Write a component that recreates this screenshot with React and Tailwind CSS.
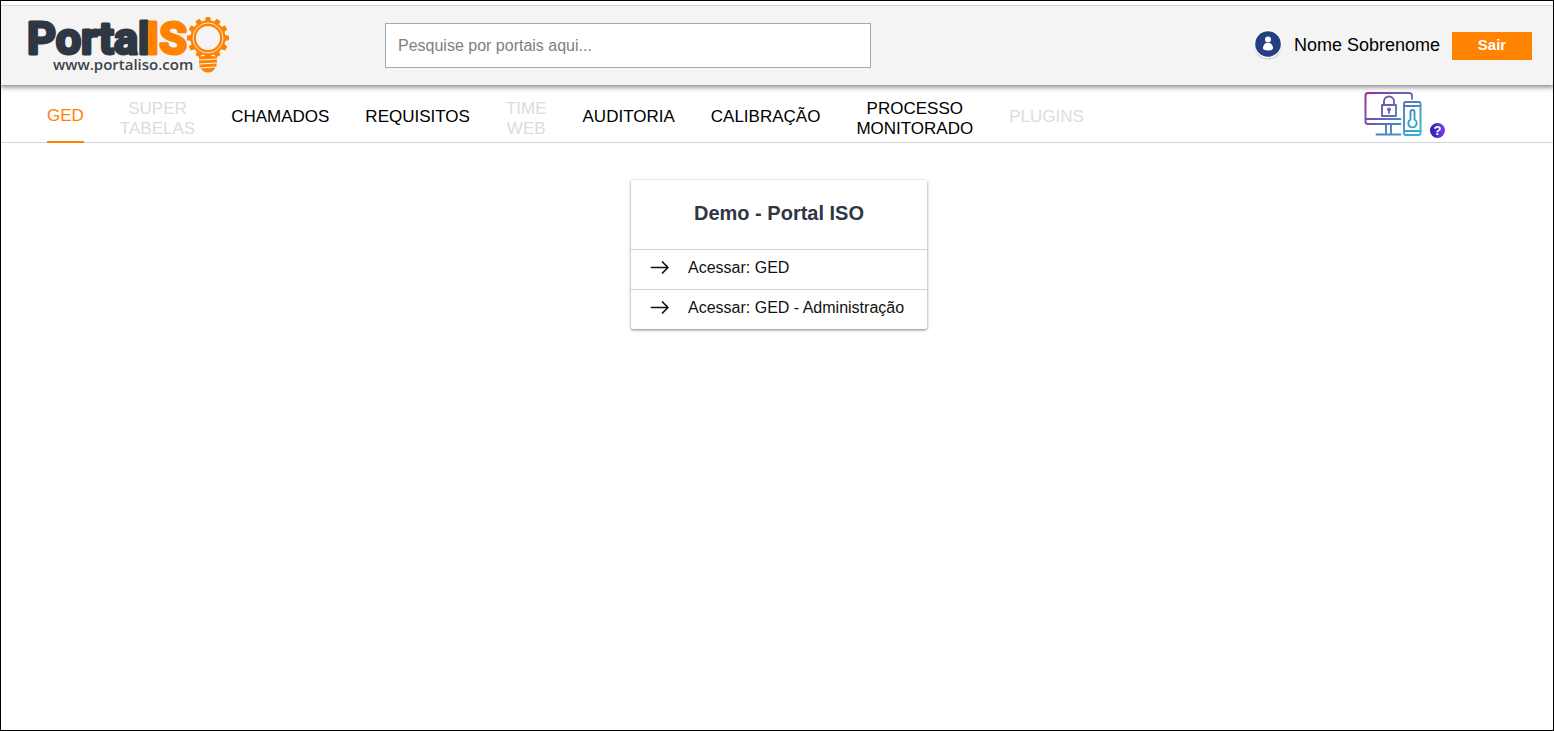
import React from "react";

const tabs = [
  { lines: ["GED"], state: "active" },
  { lines: ["SUPER", "TABELAS"], state: "disabled" },
  { lines: ["CHAMADOS"] },
  { lines: ["REQUISITOS"] },
  { lines: ["TIME", "WEB"], state: "disabled" },
  { lines: ["AUDITORIA"] },
  { lines: ["CALIBRAÇÃO"] },
  { lines: ["PROCESSO", "MONITORADO"] },
  { lines: ["PLUGINS"], state: "disabled" },
];

const links = ["Acessar: GED", "Acessar: GED - Administração"];

const teeth = [0, 30, 60, 90, 120, 150, 180, 210, 240, 270, 300, 330];

function Logo() {
  return (
    <svg width="204" height="62" viewBox="0 0 204 62" className="overflow-visible" role="img" aria-label="Portal ISO">
      <g fontFamily="Roboto, sans-serif" fontWeight="700" fontSize="45" strokeWidth="3" strokeLinejoin="round">
        <text x="0" y="39" fill="#2f3742" stroke="#2f3742">Portal</text>
        <text x="119" y="39" fill="#ff8200" stroke="#ff8200">IS</text>
      </g>
      <text x="26" y="55" fontSize="15" fontWeight="600" fontFamily="'Open Sans', 'Noto Sans', sans-serif" fill="#3b434d">
        www.portaliso.com
      </text>
      <g fill="#ff8200">
        {teeth.map((a) => (
          <path key={a} d="M-3.200 -16 L-2.200 -21 H2.200 L3.200 -16 Z" transform={`translate(181 23) rotate(${a})`} />
        ))}
        <path d="M172 41.500 q9 -1.500 18 0 v2 l-18 1 z" />
        <path d="M172 45.500 l18 -1 v3 l-18 1 z" />
        <path d="M172.500 49.500 l17 -1 v3 l-17 1 z" />
        <path d="M173.500 53.500 l15 -1 l-2.500 3.500 q-5 3 -10 0 z" />
      </g>
      <circle cx="181" cy="23" r="14.800" fill="#f4f4f4" stroke="#ff8200" strokeWidth="5.500" />
      <circle cx="181" cy="23" r="15" fill="none" stroke="#f4f4f4" strokeWidth="0.900" />
    </svg>
  );
}

function UserIcon() {
  return (
    <svg width="30" height="32" viewBox="0 0 30 32" aria-hidden="true">
      <circle cx="15" cy="15.500" r="14" fill="#d4d4d4" />
      <circle cx="15" cy="14" r="14" fill="#fff" />
      <circle cx="15" cy="14" r="12.800" fill="#234080" />
      <circle cx="15" cy="9.500" r="3" fill="#fff" />
      <path d="M15 12.800c2.400 0 3.800 1.200 4.500 3 .5 1.300.7 2.200.4 3-.4 1.200-2 1.700-4.900 1.700s-4.500-.5-4.900-1.700c-.3-.8-.1-1.700.4-3 .7-1.800 2.100-3 4.500-3z" fill="#fff" />
    </svg>
  );
}

function DevicesIcon() {
  return (
    <svg width="58" height="46" viewBox="0 0 58 46" fill="none" stroke="url(#devices)" strokeWidth="1.900" strokeLinecap="round" strokeLinejoin="round" aria-hidden="true">
      <defs>
        <linearGradient id="devices" gradientUnits="userSpaceOnUse" x1="4" y1="2" x2="54" y2="44">
          <stop offset="0" stopColor="#922f9e" />
          <stop offset="0.500" stopColor="#5a72b8" />
          <stop offset="1" stopColor="#2cb9cf" />
        </linearGradient>
      </defs>
      <path d="M48 7V3.500Q48 1 45.500 1H4Q1.500 1 1.500 3.500V30Q1.500 32 4 32H36.500M1.500 27H36.500" />
      <path d="M22 32V42M27 32V42M12.500 42.500H36.500" />
      <rect x="18" y="13" width="14" height="11" />
      <path d="M20 13V9.500a5 5 0 0 1 10 0V13M25 18V21" />
      <circle cx="25" cy="17.500" r="1" />
      <rect x="40" y="10" width="16.500" height="33" rx="1.500" />
      <path d="M40 14H56.500M40 39H56.500" />
      <path d="M46.500 27.500V20a2 2 0 0 1 4 0V27.500a4.200 4.200 0 1 1 -4 0z" />
    </svg>
  );
}

function ArrowIcon() {
  return (
    <svg width="20" height="14" viewBox="0 0 20 14" fill="none" stroke="#111" strokeWidth="1.700" strokeLinecap="round" strokeLinejoin="round" aria-hidden="true">
      <path d="M1.500 6.500H18M12.500 1L18 6.500l-5.500 5.500" />
    </svg>
  );
}

function Tab({ lines, state }) {
  const text = lines.map((line) => (
    <span key={line} className="block">{line}</span>
  ));
  const offset = lines.length > 1 ? "pt-2.5" : "pt-1.5";
  if (state === "disabled") {
    return (
      <button type="button" disabled className={`flex flex-col items-center justify-center text-[#dcdcdc] ${offset}`}>{text}</button>
    );
  }
  if (state === "active") {
    return (
      <a href="#ged" aria-current="page" className={`-mb-px flex items-center border-b-2 border-[#ff8200] text-[#ff8200] ${offset}`}>{text}</a>
    );
  }
  return (
    <a href="#modulo" className={`flex flex-col items-center justify-center text-black ${offset}`}>{text}</a>
  );
}

export default function App() {
  return (
    <div className="min-h-screen border border-black bg-white pt-1 font-['Liberation_Sans',Arial,sans-serif]">
      <header className="flex h-20 items-center border-t border-[#d4d4d4] bg-[#f4f4f4] pr-[21px] pl-[26px] shadow-[0_1px_5px_1px_rgba(0,0,0,0.5)] [clip-path:inset(0_0_-10px_0)]">
        <div className="w-[358px] shrink-0">
          <a href="#inicio" className="inline-block align-middle"><Logo /></a>
        </div>
        <input
          type="search"
          aria-label="Pesquise por portais aqui"
          placeholder="Pesquise por portais aqui..."
          className="h-[45px] w-[486px] border border-[#a9a9a9] bg-white px-3 text-base text-black placeholder:text-[#808080]"
        />
        <div className="ml-auto flex items-center gap-3">
          <div className="flex items-center gap-[11px]">
            <UserIcon />
            <span className="pb-px text-lg text-black">Nome Sobrenome</span>
          </div>
          <button type="button" className="h-7 w-20 bg-[#ff8200] text-[15px] font-bold text-white">Sair</button>
        </div>
      </header>

      <nav className="flex h-[58px] justify-between border-b border-[#d4d4d4] pr-[108px] pl-[46px]">
        <div className="flex gap-9 text-[17px] leading-5">
          {tabs.map((tab) => (
            <Tab key={tab.lines[0]} {...tab} />
          ))}
        </div>
        <div className="flex items-end gap-2 pb-1">
          <DevicesIcon />
          <button type="button" aria-label="Ajuda" className="size-[15px] rounded-full bg-linear-to-r from-[#2020a8] to-[#7a3cfa] text-[13px] leading-[15px] font-bold text-white">?</button>
        </div>
      </nav>

      <main className="flex justify-center pt-[37px] pl-1">
        <section className="w-[296px] rounded-[2px] bg-white shadow-[0_1px_3px_rgba(0,0,0,0.5)]">
          <h1 className="pt-[18px] pb-[21px] text-center text-xl leading-[30px] font-bold text-[#2f3742]">Demo - Portal ISO</h1>
          <ul>
            {links.map((label) => (
              <li key={label} className="border-t border-[#d0d0d0]">
                <a href="#acessar" className="flex h-[39px] items-center gap-[18px] pb-1 pl-[19px] text-base text-[#111]">
                  <ArrowIcon />
                  <span>{label}</span>
                </a>
              </li>
            ))}
          </ul>
        </section>
      </main>
    </div>
  );
}
